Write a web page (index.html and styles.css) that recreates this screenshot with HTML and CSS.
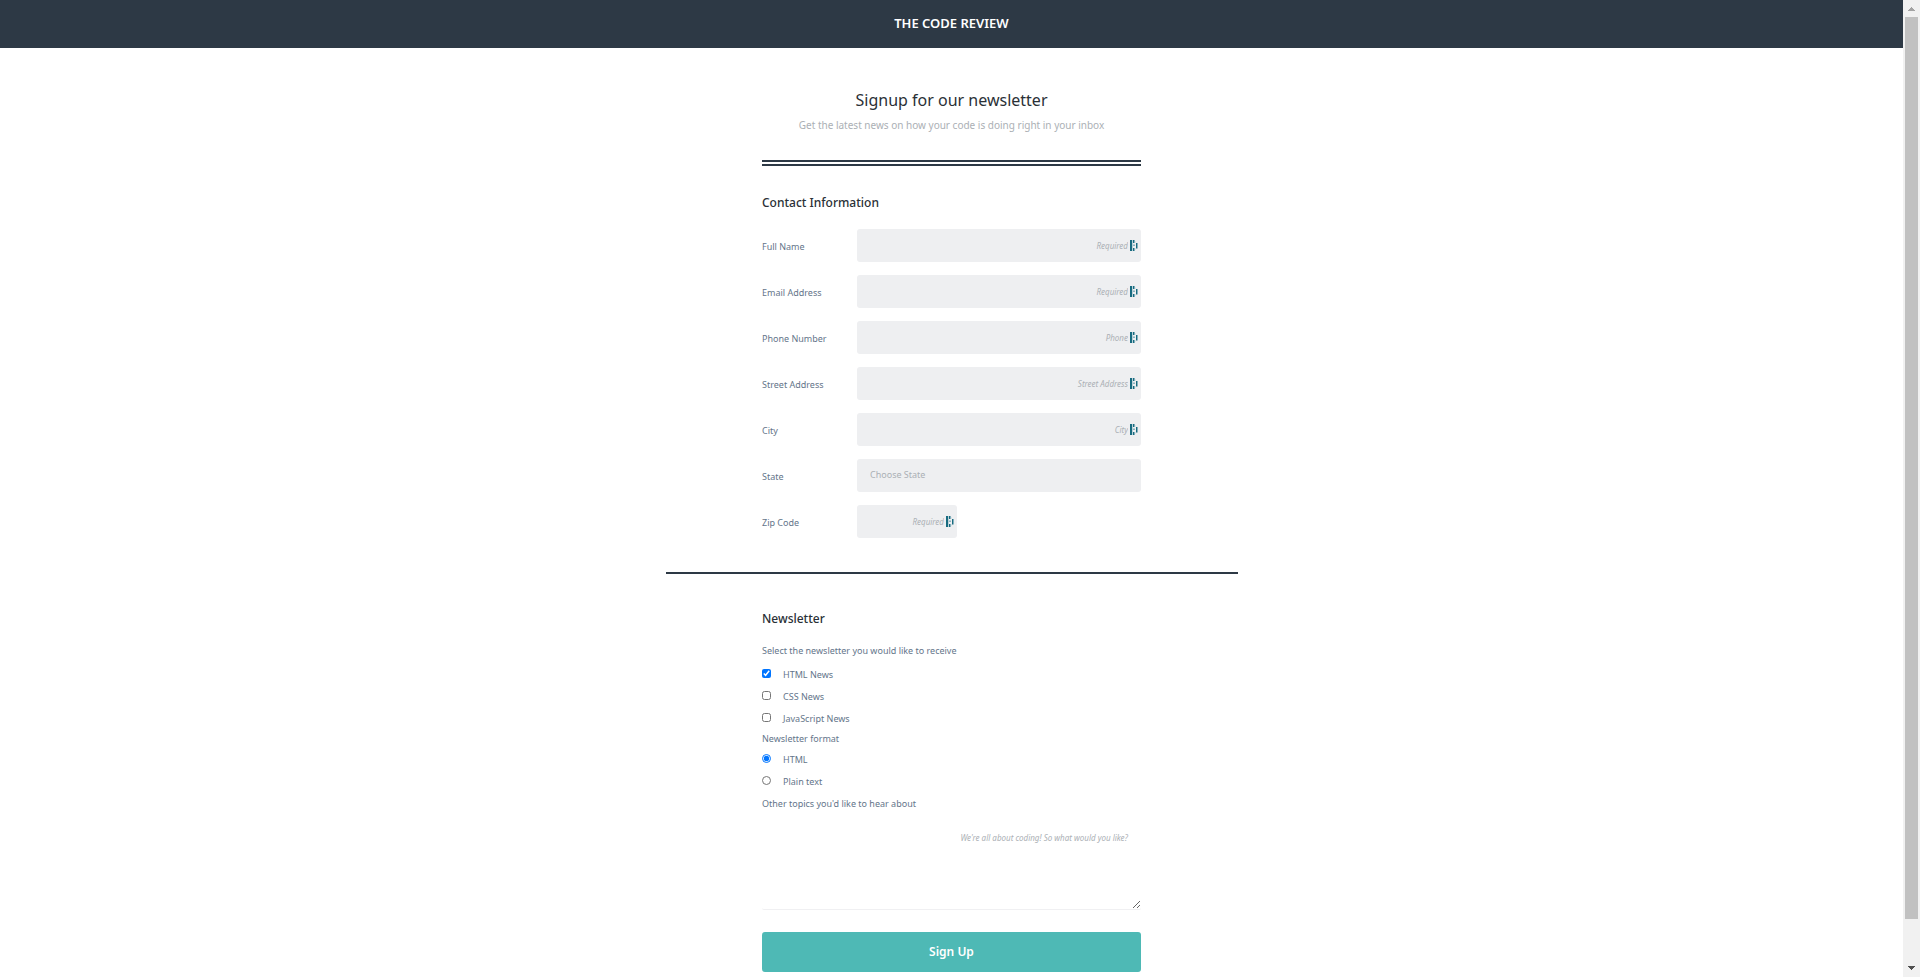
FILE: index.html
```html
<!DOCTYPE html>
<html lang="en">
<head>
<meta charset="utf-8">
<title>The Code Review</title>
<link rel="stylesheet" href="styles.css">
</head>
<body>
<svg class="defs" width="0" height="0" aria-hidden="true">
  <symbol id="fill-mark" viewBox="0 0 8 11">
    <path d="M0 0h2v11H0zM3 0h1.500v3H3zM3 8h1.500v3H3zM6 3h1.500v5.500H6z" fill="#176b80"/>
    <path d="M2 0h.5v11H2zM4.500 1h.7v2h-.7zM4.500 8h.7v2h-.7zM3 4.500h2v1.500H3zM7.500 3.500h.5v4.500h-.5z" fill="#8ab4bf"/>
  </symbol>
</svg>
<div class="page">
  <header class="site-header"><h1 class="brand">THE CODE REVIEW</h1></header>
  <main>
    <form class="signup">
      <div class="intro">
        <h2 class="title">Signup for our newsletter</h2>
        <p class="tagline">Get the latest news on how your code is doing right in your inbox</p>
      </div>
      <section class="contact">
        <h3 class="section-title">Contact Information</h3>
        <div class="row"><label for="name">Full Name</label><div class="field"><input class="control" id="name" type="text" placeholder="Required"><svg class="mark"><use href="#fill-mark"/></svg></div></div>
        <div class="row"><label for="email">Email Address</label><div class="field"><input class="control" id="email" type="email" placeholder="Required"><svg class="mark"><use href="#fill-mark"/></svg></div></div>
        <div class="row"><label for="phone">Phone Number</label><div class="field"><input class="control" id="phone" type="tel" placeholder="Phone"><svg class="mark"><use href="#fill-mark"/></svg></div></div>
        <div class="row"><label for="street">Street Address</label><div class="field"><input class="control" id="street" type="text" placeholder="Street Address"><svg class="mark"><use href="#fill-mark"/></svg></div></div>
        <div class="row"><label for="city">City</label><div class="field"><input class="control" id="city" type="text" placeholder="City"><svg class="mark"><use href="#fill-mark"/></svg></div></div>
        <div class="row"><label for="state">State</label><div class="field"><select class="control" id="state"><option>Choose State</option></select></div></div>
        <div class="row"><label for="zip">Zip Code</label><div class="field field-short"><input class="control" id="zip" type="text" placeholder="Required"><svg class="mark"><use href="#fill-mark"/></svg></div></div>
      </section>
      <hr class="divider">
      <section class="newsletter">
        <h3 class="section-title">Newsletter</h3>
        <fieldset class="group">
          <legend>Select the newsletter you would like to receive</legend>
          <label class="option"><input type="checkbox" checked>HTML News</label>
          <label class="option"><input type="checkbox">CSS News</label>
          <label class="option"><input type="checkbox">JavaScript News</label>
        </fieldset>
        <fieldset class="group group-format">
          <legend>Newsletter format</legend>
          <label class="option"><input type="radio" name="format" checked>HTML</label>
          <label class="option"><input type="radio" name="format">Plain text</label>
        </fieldset>
        <label class="topics-label" for="topics">Other topics you'd like to hear about</label>
        <textarea class="topics" id="topics" placeholder="We're all about coding! So what would you like?"></textarea>
        <button class="submit" type="submit">Sign Up</button>
      </section>
    </form>
  </main>
</div>
<div class="scrollbar" aria-hidden="true">
  <svg width="17" height="17" viewBox="0 0 17 17"><path d="M5 11h7v-1h-1V9h-1V8H9V7H8v1H7v1H6v1H5z" fill="#a3a3a3"/></svg>
  <div class="track"><div class="thumb"></div></div>
  <svg width="17" height="17" viewBox="0 0 17 17"><path d="M5 6h7v1h-1v1h-1v1H9v1H8V9H7V8H6V7H5z" fill="#505050"/></svg>
</div>
</body>
</html>
```
FILE: styles.css
```css
* { box-sizing: border-box; }

body {
  display: grid;
  grid-template-columns: 1fr 17px;
  margin: 0;
  background: #fff;
  color: #64758a;
  font: 9px/14px "Noto Sans", sans-serif;
}

.defs { position: absolute; }

h1, h2, h3, p { margin: 0; }

.site-header {
  padding: 13px 14px 15px;
  background: #2d3945;
  color: #fff;
  text-align: center;
}

.brand { font-size: 13px; line-height: 20px; font-weight: 600; }

.signup {
  display: flex;
  flex-direction: column;
  align-items: center;
  padding: 40px 0 4px;
}

.intro, .contact, .newsletter {
  width: 100%;
  max-width: 379px;
}

.intro {
  padding-bottom: 28px;
  border-bottom: 6px double #2d3945;
  text-align: center;
}

.title {
  color: #2a3036;
  font-size: 16px;
  line-height: 24px;
  font-weight: 400;
}

.tagline { margin-top: 6px; color: #abb0b5; font-size: 10px; line-height: 14px; }

.section-title {
  color: #2a3036;
  font-size: 12px;
  line-height: 18px;
  font-weight: 500;
}

.contact { padding-top: 28px; }
.contact .section-title { margin-bottom: 17px; }

.row {
  display: grid;
  grid-template-columns: 95px 1fr;
  align-items: center;
  margin-bottom: 13px;
}

.row label { padding-top: 2px; }

.field { position: relative; }
.field-short { width: 100px; }

.control {
  display: block;
  width: 100%;
  height: 33px;
  padding: 0 13px;
  border: 0;
  border-radius: 3px;
  background: #eeeff1;
  color: #abb0b5;
  font: inherit;
}

select.control { padding-bottom: 2px; appearance: none; }

::placeholder {
  color: #abb0b5;
  font-size: 8px;
  font-style: italic;
  text-align: right;
}

.mark {
  position: absolute;
  top: 11px;
  right: 3px;
  width: 8px;
  height: 11px;
}

.divider {
  width: 100%;
  max-width: 572px;
  height: 2px;
  margin: 21px 0 36px;
  border: 0;
  background: #2d3945;
}

.newsletter .section-title { margin-bottom: 16px; }

.group {
  display: grid;
  gap: 8px;
  min-width: 0;
  margin: 0;
  padding: 0;
  border: 0;
}

.group legend { margin-bottom: 10px; padding: 0; }
.group-format { margin-top: 6px; }
.group-format legend { margin-bottom: 7px; }

.option { display: flex; gap: 12px; }
.option input { width: 9px; height: 9px; margin: 1px 0 0; }

.topics-label { display: block; margin-top: 8px; }

.topics {
  display: block;
  width: 100%;
  height: 90px;
  margin: 9px 0 22px;
  padding: 11px 13px;
  border: 0;
  border-bottom: 1px solid #f0f0f2;
  border-radius: 2px;
  background: transparent;
  font: inherit;
  resize: vertical;
}

.submit {
  display: block;
  width: 100%;
  padding: 10px;
  border: 0;
  border-radius: 3px;
  background: #4eb9b5;
  color: #fff;
  font: 600 12px/20px "Noto Sans", sans-serif;
}

.scrollbar {
  position: sticky;
  top: 0;
  display: flex;
  flex-direction: column;
  height: 100vh;
  background: #f1f1f1;
}

.scrollbar svg { display: block; flex: none; }
.track { flex: 1; padding: 0 2px; }
.thumb { height: 95.6%; background: #c1c1c1; }
```
